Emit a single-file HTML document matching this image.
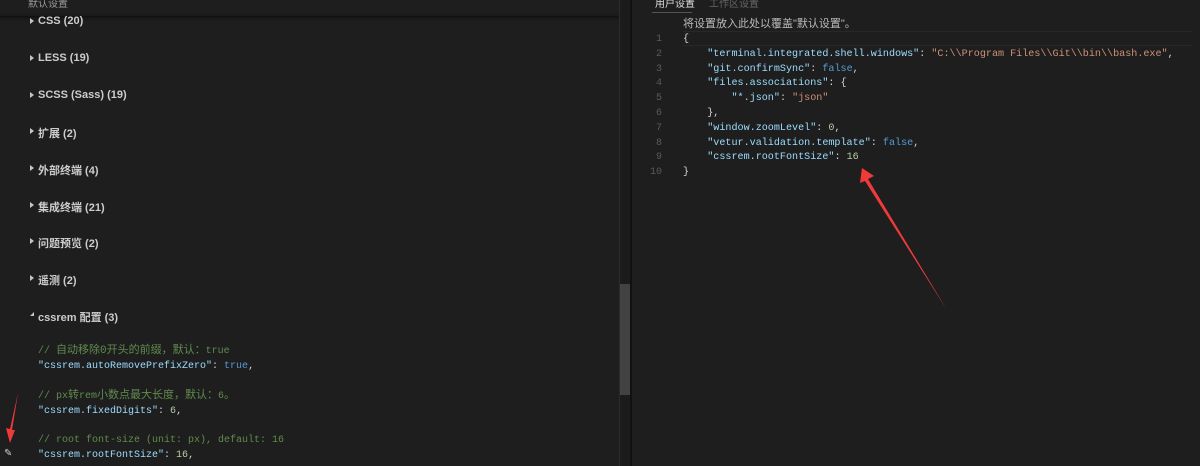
<!DOCTYPE html>
<html><head><meta charset="utf-8"><style>
*{margin:0;padding:0;box-sizing:border-box}
body{width:1200px;height:466px;background:#1e1e1e;position:relative;overflow:hidden;font-family:"Liberation Sans","Noto Sans CJK SC",sans-serif}
.a{position:absolute;white-space:pre}
.h{font-size:11px;font-weight:bold;color:#cccccc}
.tri{position:absolute;width:0;height:0;border-top:3px solid transparent;border-bottom:3px solid transparent;border-left:4px solid #c5c5c5}
.m{font-family:"Liberation Mono","Noto Sans CJK SC",monospace;font-size:10px;line-height:14.7px}
.k{color:#9cdcfe}.s{color:#ce9178}.b{color:#569cd6}.n{color:#b5cea8}.c{color:#608b4e}.p{color:#d4d4d4}
.cj{font-size:11px}
.ln{position:absolute;white-space:pre;left:640px;width:22px;text-align:right;color:#5a5a5a;font-family:"Liberation Mono",monospace;font-size:10px}
</style></head><body>
<div class="a" style="left:0;top:16px;width:619px;height:1px;background:#111;box-shadow:0 1px 3px #000"></div>
<div class="a" style="left:28px;top:-5px;font-size:10px;color:#999">默认设置</div>
<div class="a" style="left:619px;top:0;width:1px;height:466px;background:#2c2c2c"></div>
<div class="a" style="left:620px;top:0;width:10px;height:466px;background:#1b1b1b"></div>
<div class="a" style="left:620px;top:284px;width:10px;height:111px;background:#424242"></div>
<div class="a" style="left:630px;top:0;width:2px;height:466px;background:#111"></div>

<div class="tri" style="left:30px;top:18px"></div><div class="a h" style="left:38px;top:15px">CSS (20)</div>
<div class="tri" style="left:30px;top:55px"></div><div class="a h" style="left:38px;top:52px">LESS (19)</div>
<div class="tri" style="left:30px;top:92px"></div><div class="a h" style="left:38px;top:89px">SCSS (Sass) (19)</div>
<div class="tri" style="left:30px;top:128px"></div><div class="a h" style="left:38px;top:125px">扩展 (2)</div>
<div class="tri" style="left:30px;top:165px"></div><div class="a h" style="left:38px;top:162px">外部终端 (4)</div>
<div class="tri" style="left:30px;top:202px"></div><div class="a h" style="left:38px;top:199px">集成终端 (21)</div>
<div class="tri" style="left:30px;top:238px"></div><div class="a h" style="left:38px;top:235px">问题预览 (2)</div>
<div class="tri" style="left:30px;top:275px"></div><div class="a h" style="left:38px;top:272px">遥测 (2)</div>
<div class="a" style="left:30px;top:312px;width:0;height:0;border-left:4px solid transparent;border-bottom:4px solid #c5c5c5"></div><div class="a h" style="left:38px;top:309px">cssrem 配置 (3)</div>

<div class="a m" style="left:38px;top:344px"><span class="c">// <span class="cj">自动移除0开头的前缀，默认：</span>true</span>
<span class="k">"cssrem.autoRemovePrefixZero"</span><span class="p">: </span><span class="b">true</span><span class="p">,</span>

<span class="c">// px<span class="cj">转</span>rem<span class="cj">小数点最大长度，默认：</span>6<span class="cj">。</span></span>
<span class="k">"cssrem.fixedDigits"</span><span class="p">: </span><span class="n">6</span><span class="p">,</span>

<span class="c">// root font-size (unit: px), default: 16</span>
<span class="k">"cssrem.rootFontSize"</span><span class="p">: </span><span class="n">16</span><span class="p">,</span></div>
<div class="a" style="left:4px;top:448px;font-size:10px;color:#ccc">✎</div>

<div class="a" style="left:655px;top:-5px;font-size:10px;color:#ddd">用户设置</div>
<div class="a" style="left:709px;top:-5px;font-size:10px;color:#666">工作区设置</div>
<div class="a" style="left:652px;top:12px;width:40px;height:1px;background:#555"></div>
<div class="a" style="left:683px;top:15px;font-size:11px;color:#bbb">将设置放入此处以覆盖"默认设置"。</div>
<div class="a" style="left:683px;top:31px;width:510px;height:15px;border-top:1px solid #282828;border-bottom:1px solid #282828"></div>
<div class="ln" style="top:33px;line-height:14.8px">1
2
3
4
5
6
7
8
9
10</div>
<div class="a m" style="left:683px;top:33px;line-height:14.8px;font-size:10.1px"><span class="p">{</span>
    <span class="k">"terminal.integrated.shell.windows"</span><span class="p">: </span><span class="s">"C:\\Program Files\\Git\\bin\\bash.exe"</span><span class="p">,</span>
    <span class="k">"git.confirmSync"</span><span class="p">: </span><span class="b">false</span><span class="p">,</span>
    <span class="k">"files.associations"</span><span class="p">: {</span>
        <span class="k">"*.json"</span><span class="p">: </span><span class="s">"json"</span>
    <span class="p">},</span>
    <span class="k">"window.zoomLevel"</span><span class="p">: </span><span class="n">0</span><span class="p">,</span>
    <span class="k">"vetur.validation.template"</span><span class="p">: </span><span class="b">false</span><span class="p">,</span>
    <span class="k">"cssrem.rootFontSize"</span><span class="p">: </span><span class="n">16</span>
<span class="p">}</span></div>

<svg class="a" style="left:0;top:0" width="1200" height="466">
<polygon points="862,168 874,176 868,179 947,310 865,181 860,183" fill="#f03a3a"/>
<polygon points="10,443 6,428 10,429 18,393 12,430 15,430" fill="#f03a3a"/>
</svg>
</body></html>
